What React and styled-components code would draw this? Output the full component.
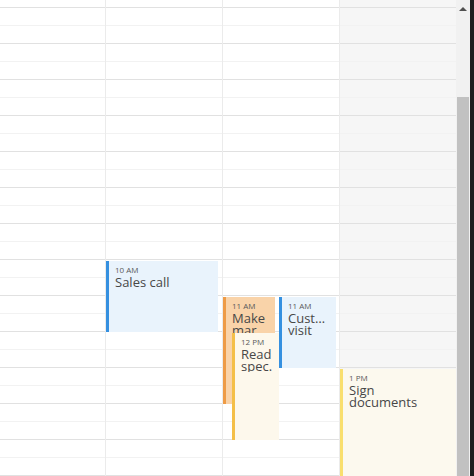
import React from "react";
import styled, { createGlobalStyle } from "styled-components";

const GlobalStyle = createGlobalStyle`
  html, body {
    margin: 0;
    padding: 0;
    overflow: hidden;
    background: #ffffff;
  }
  body {
    font-family: "Open Sans", "Liberation Sans", sans-serif;
  }
`;

const HOUR = 36;
const FIRST_HOUR = 2.5; // the view is scrolled so that 2:30 sits just above the top
const SLOT_COUNT = 28;

const columns = [
  { width: 105, weekend: false },
  { width: 117, weekend: false },
  { width: 117, weekend: false },
  { width: 117, weekend: true },
];

const palette = {
  blue: { border: "#3590e0", bg: "#e9f3fc" },
  orange: { border: "#ee9b46", bg: "#f9d3a9" },
  amber: { border: "#f4bf48", bg: "#fdf8ec" },
  yellow: { border: "#f9df6e", bg: "#fcf9ee" },
};

const events = [
  { col: 1, start: 10, end: 12, time: "10 AM", title: "Sales call", color: "blue", left: 0, width: 112 },
  { col: 2, start: 11, end: 14, time: "11 AM", title: "Make marketing", color: "orange", left: 0, width: 52 },
  { col: 2, start: 11, end: 13, time: "11 AM", title: "Customer visit", color: "blue", left: 56, width: 57 },
  { col: 2, start: 12, end: 15, time: "12 PM", title: "Read spec.", color: "amber", left: 9, width: 47 },
  { col: 3, start: 13, end: 17, time: "1 PM", title: "Sign documents", color: "yellow", left: 0, width: 117 },
];

const Frame = styled.div`
  display: flex;
  width: 474px;
  height: 476px;
  overflow: hidden;
`;

const Viewport = styled.div`
  flex: 1;
  overflow: hidden;
`;

const Grid = styled.div`
  display: grid;
  grid-template-columns: ${({ $cols }) => $cols};
  margin-top: -10px;
`;

const DayColumn = styled.div`
  position: relative;
  border-left: ${({ $first }) => ($first ? "none" : "1px solid #ebebeb")};
  background: ${({ $weekend }) => ($weekend ? "#f6f6f6" : "#ffffff")};
`;

const Slot = styled.div`
  height: 17px;
  border-bottom: 1px solid ${({ $hour }) => ($hour ? "#e1e1e1" : "#f2f2f2")};
`;

const Event = styled.div`
  position: absolute;
  box-sizing: border-box;
  overflow: hidden;
  padding: 3px 6px 0 6px;
  border-left: 3px solid ${({ $color }) => palette[$color].border};
  background: ${({ $color }) => palette[$color].bg};
`;

const EventTime = styled.div`
  font-size: 8px;
  line-height: 11px;
  margin-bottom: 1px;
  color: #5a5a5a;
  white-space: nowrap;
`;

const EventTitle = styled.div`
  max-width: 7.2em;
  font-size: 13px;
  line-height: 12px;
  color: #474747;
  overflow: hidden;
  text-overflow: ellipsis;
`;

const Scrollbar = styled.div`
  width: 14px;
  display: flex;
  flex-direction: column;
  background: #f1f1f1;
`;

const ArrowButton = styled.div`
  height: 17px;
  display: flex;
  align-items: center;
  justify-content: center;
`;

const Arrow = styled.div`
  width: 0;
  height: 0;
  border-left: 4px solid transparent;
  border-right: 4px solid transparent;
  border-bottom: 4px solid #505050;
`;

const TrackGap = styled.div`
  height: 80px;
`;

const Thumb = styled.div`
  flex: 1;
  margin: 0 1px;
  background: #c1c1c1;
`;

const Edge = styled.div`
  width: 4px;
  background: #1f1f1f;
`;

const hourTop = (h) => (h - FIRST_HOUR) * HOUR + 1;

const App = () => {
  const slots = Array.from({ length: SLOT_COUNT }, (_, i) => i);

  return (
    <>
      <GlobalStyle />
      <Frame>
        <Viewport>
          <Grid $cols={columns.map((c) => `${c.width}px`).join(" ")}>
            {columns.map((col, ci) => (
              <DayColumn key={ci} $first={ci === 0} $weekend={col.weekend}>
                {slots.map((s) => (
                  <Slot key={s} $hour={s % 2 === 0} />
                ))}
                {events
                  .filter((e) => e.col === ci)
                  .map((e, i) => (
                    <Event
                      key={i}
                      $color={e.color}
                      style={{
                        top: hourTop(e.start),
                        height: (e.end - e.start) * HOUR - 1,
                        left: e.left,
                        width: e.width,
                      }}
                    >
                      <EventTime>{e.time}</EventTime>
                      <EventTitle>{e.title}</EventTitle>
                    </Event>
                  ))}
              </DayColumn>
            ))}
          </Grid>
        </Viewport>
        <Scrollbar>
          <ArrowButton>
            <Arrow />
          </ArrowButton>
          <TrackGap />
          <Thumb />
        </Scrollbar>
        <Edge />
      </Frame>
    </>
  );
};

export default App;
